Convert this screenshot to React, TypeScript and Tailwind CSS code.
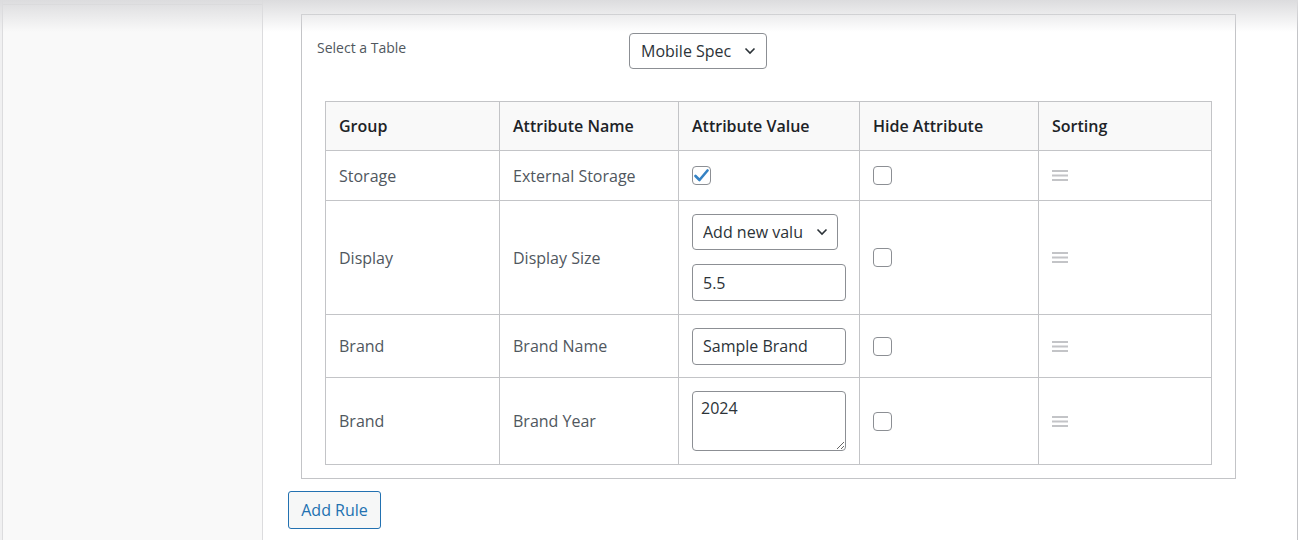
import React from 'react';

type Row = {
    group: string;
    name: string;
    kind: 'checkbox' | 'select' | 'text' | 'textarea';
    value?: string;
    height: string;
};

const rows: Row[] = [
    { group: 'Storage', name: 'External Storage', kind: 'checkbox', height: 'h-[50px]' },
    { group: 'Display', name: 'Display Size', kind: 'select', value: '5.5', height: 'h-[114px]' },
    { group: 'Brand', name: 'Brand Name', kind: 'text', value: 'Sample Brand', height: 'h-[63px]' },
    { group: 'Brand', name: 'Brand Year', kind: 'textarea', value: '2024', height: 'h-[87px]' },
];

const Chevron = () => (
    <svg width="12" height="8" viewBox="0 0 12 8" className="shrink-0">
        <path d="M1.5 1.5 L6 6 L10.5 1.5" fill="none" stroke="#2c3338" strokeWidth="1.6" />
    </svg>
);

const Checkbox: React.FC<{ checked?: boolean }> = ({ checked }) => (
    <div className="w-[19px] h-[19px] rounded-[4px] border border-[#8c8f94] bg-white flex items-center justify-center">
        {checked && (
            <svg width="15" height="13" viewBox="0 0 15 13">
                <path d="M1.5 7 L5.5 11 L13.5 1.5" fill="none" stroke="#3582c4" strokeWidth="2.6" strokeLinecap="round" strokeLinejoin="round" />
            </svg>
        )}
    </div>
);

const SortHandle = () => (
    <svg width="16" height="11" viewBox="0 0 16 11">
        <rect x="0" y="0" width="16" height="2" fill="#c3c4c7" />
        <rect x="0" y="4.5" width="16" height="2" fill="#c3c4c7" />
        <rect x="0" y="9" width="16" height="2" fill="#c3c4c7" />
    </svg>
);

const ValueCell: React.FC<{ row: Row }> = ({ row }) => {
    if (row.kind === 'checkbox') return <Checkbox checked />;
    if (row.kind === 'select') {
        return (
            <div className="flex flex-col gap-[14px]">
                <div className="w-[146px] h-[36px] rounded-[4px] border border-[#8c8f94] bg-white flex items-center pl-[10px] pr-[9px] gap-[8px] text-[16px] text-[#2c3338]">
                    <span className="overflow-hidden whitespace-nowrap flex-1">Add new valu</span>
                    <Chevron />
                </div>
                <div className="w-[154px] h-[37px] rounded-[4px] border border-[#8c8f94] bg-white flex items-center px-[10px] text-[16px] text-[#2c3338]">
                    {row.value}
                </div>
            </div>
        );
    }
    if (row.kind === 'text') {
        return (
            <div className="w-[154px] h-[37px] rounded-[4px] border border-[#8c8f94] bg-white flex items-center px-[10px] text-[16px] text-[#2c3338]">
                {row.value}
            </div>
        );
    }
    return (
        <textarea
            defaultValue={row.value}
            className="block w-[154px] h-[60px] rounded-[4px] border border-[#8c8f94] bg-white px-[8px] pt-[4px] text-[16px] leading-[24px] text-[#2c3338] outline-none"
        />
    );
};

const App = () => {
    return (
        <div className="relative flex h-[540px] w-[1298px] overflow-hidden bg-white font-['Open_Sans',sans-serif]">
            {/* top shadow from the admin bar */}
            <div className="pointer-events-none absolute inset-x-0 top-0 h-[32px] bg-gradient-to-b from-[#dcdcde] to-transparent" />

            {/* left rail */}
            <div className="w-[2px] bg-[#f0f0f1]" />
            <div className="w-[261px] border-l border-r border-[#dcdcde] bg-[#f9f9f9] flex flex-col">
                <div className="h-[5px] border-b border-[#d0d0d0]" />
            </div>

            {/* main */}
            <main className="flex-1 border-r border-[#c3c4c7] pl-[25px] pt-[14px]">
                <div className="ml-[13px] w-[935px] border border-[#c3c4c7] bg-white px-[15px] pt-[18px] pb-[13px]">
                    <div className="flex items-start">
                        <div className="w-[312px] pt-[5px] text-[14px] leading-[20px] text-[#50575e]">Select a Table</div>
                        <div className="flex h-[36px] w-[138px] items-center justify-between rounded-[4px] border border-[#8c8f94] bg-white pl-[11px] pr-[10px] text-[16px] text-[#2c3338]">
                            <span className="whitespace-nowrap">Mobile Spec</span>
                            <Chevron />
                        </div>
                    </div>

                    <table className="ml-[8px] mt-[32px] w-[887px] border-collapse text-[16px] text-[#50575e]">
                        <thead>
                            <tr className="h-[49px] bg-[#f9f9f9] text-left text-[#1d2327]">
                                <th className="w-[174px] border border-[#c3c4c7] px-[13px] font-semibold">Group</th>
                                <th className="w-[179px] border border-[#c3c4c7] px-[13px] font-semibold">Attribute Name</th>
                                <th className="w-[179px] border border-[#c3c4c7] px-[13px] font-semibold">Attribute Value</th>
                                <th className="w-[179px] border border-[#c3c4c7] px-[13px] font-semibold">Hide Attribute</th>
                                <th className="border border-[#c3c4c7] px-[13px] font-semibold">Sorting</th>
                            </tr>
                        </thead>
                        <tbody>
                            {rows.map((row) => (
                                <tr key={row.name} className={row.height}>
                                    <td className="border border-[#c3c4c7] px-[13px] align-middle">{row.group}</td>
                                    <td className="border border-[#c3c4c7] px-[13px] align-middle">{row.name}</td>
                                    <td className="border border-[#c3c4c7] px-[13px] align-middle">
                                        <ValueCell row={row} />
                                    </td>
                                    <td className="border border-[#c3c4c7] px-[13px] align-middle">
                                        <Checkbox />
                                    </td>
                                    <td className="border border-[#c3c4c7] px-[13px] align-middle">
                                        <SortHandle />
                                    </td>
                                </tr>
                            ))}
                        </tbody>
                    </table>
                </div>

                <button className="mt-[12px] h-[38px] w-[93px] rounded-[3px] border border-[#2271b1] bg-[#f6f7f7] text-[16px] text-[#2271b1]">
                    Add Rule
                </button>
            </main>
        </div>
    );
};

export default App;
